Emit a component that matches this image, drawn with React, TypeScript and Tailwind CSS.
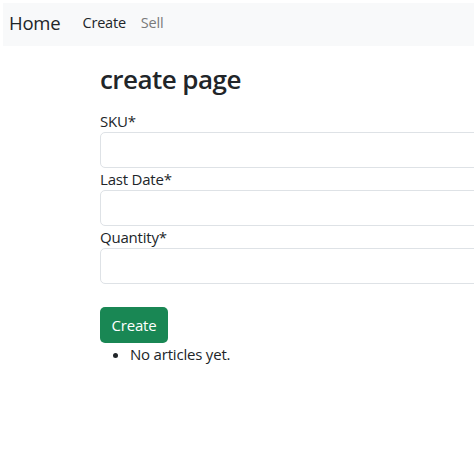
import React from "react";

export default function App() {
  return (
    <div
      className="w-[474px] h-[450px] overflow-hidden bg-white text-[#212529]"
      style={{ fontFamily: '"Open Sans", "Noto Sans", sans-serif' }}
    >
      <nav className="ml-[3px] mt-[3px] h-[43px] bg-[#f8f9fa] flex items-center pl-[6px] pb-[3px]">
        <span className="text-[18.5px] leading-none text-[#212529] tracking-[-0.2px]">Home</span>
        <span className="ml-[22px] text-[14.5px] leading-none text-[#212529] tracking-[-0.2px]">Create</span>
        <span className="ml-[15px] text-[14.5px] leading-none text-[#7a7a7a] tracking-[-0.2px]">Sell</span>
      </nav>
      <main className="pl-[100px] pt-[18px]">
        <h3 className="text-[26px] font-semibold leading-[31px] mb-[15px] tracking-[-0.55px]">create page</h3>
        <form className="flex flex-col">
          <label className="text-[15px] leading-[22px] tracking-[-0.2px]">SKU*</label>
          <input className="w-[400px] h-[36px] border border-[#dee2e6] rounded-[5px] bg-white" />
          <label className="text-[15px] leading-[22px] tracking-[-0.2px]">Last Date*</label>
          <input className="w-[400px] h-[36px] border border-[#dee2e6] rounded-[5px] bg-white" />
          <label className="text-[15px] leading-[22px] tracking-[-0.2px]">Quantity*</label>
          <input className="w-[400px] h-[36px] border border-[#dee2e6] rounded-[5px] bg-white" />
          <div className="mt-[23px]">
            <button
              type="button"
              className="h-[36px] w-[68px] rounded-[5px] bg-[#198754] text-white text-[15px] leading-none tracking-[-0.2px]"
            >
              Create
            </button>
          </div>
        </form>
        <ul className="list-disc pl-[30px] text-[15px] leading-[22px] tracking-[-0.2px]">
          <li>No articles yet.</li>
        </ul>
      </main>
    </div>
  );
}
